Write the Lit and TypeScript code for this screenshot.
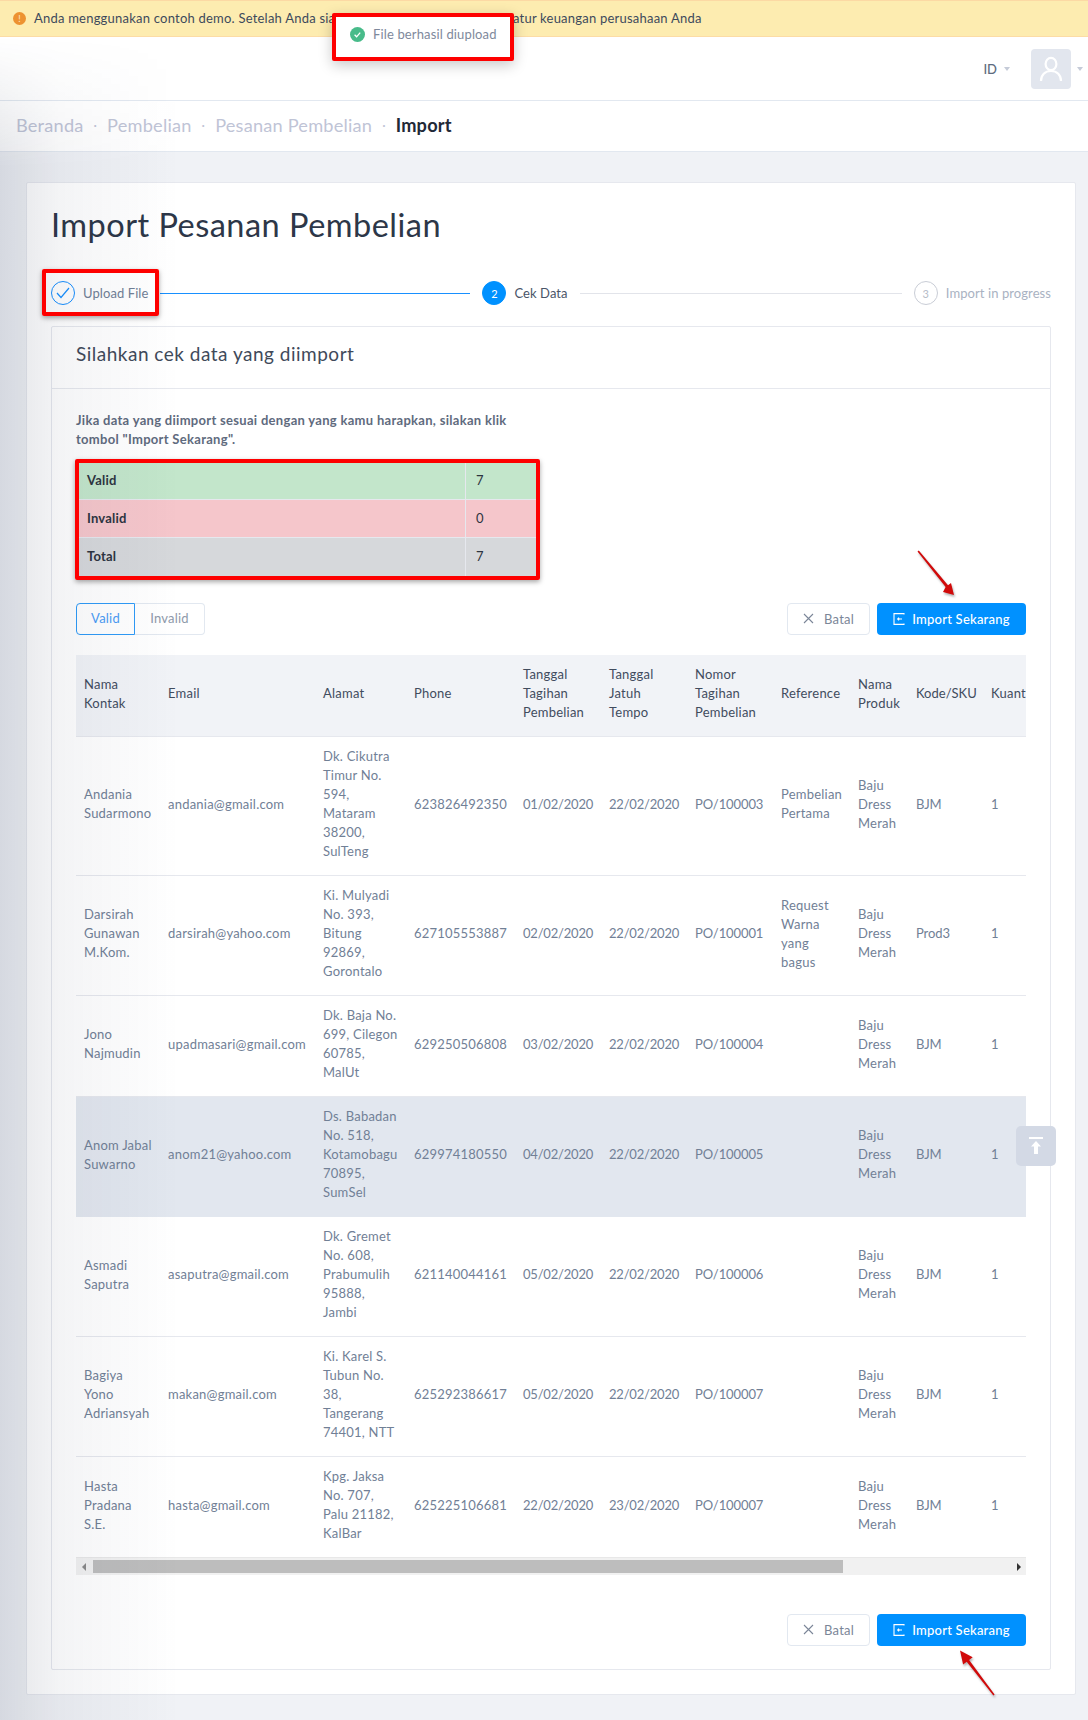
import { LitElement, html, css, svg } from 'lit';
import { customElement } from 'lit/decorators.js';

const columns = [
  { label: 'Nama\nKontak', width: 84 },
  { label: 'Email', width: 155 },
  { label: 'Alamat', width: 91 },
  { label: 'Phone', width: 109 },
  { label: 'Tanggal\nTagihan\nPembelian', width: 86 },
  { label: 'Tanggal\nJatuh\nTempo', width: 86 },
  { label: 'Nomor\nTagihan\nPembelian', width: 86 },
  { label: 'Reference', width: 77 },
  { label: 'Nama\nProduk', width: 58 },
  { label: 'Kode/SKU', width: 75 },
  { label: 'Kuantitas', width: 253 },
];

// Lato sets these columns a little wider than the original font
const cellClass = ['', '', '', '', 'date', 'date', 'code', '', '', 'code', ''];

const produk = 'Baju\nDress\nMerah';

const rows = [
  ['Andania\nSudarmono', 'andania@gmail.com', 'Dk. Cikutra\nTimur No.\n594,\nMataram\n38200,\nSulTeng', '623826492350', '01/02/2020', '22/02/2020', 'PO/100003', 'Pembelian\nPertama', produk, 'BJM', '1'],
  ['Darsirah\nGunawan\nM.Kom.', 'darsirah@yahoo.com', 'Ki. Mulyadi\nNo. 393,\nBitung\n92869,\nGorontalo', '627105553887', '02/02/2020', '22/02/2020', 'PO/100001', 'Request\nWarna\nyang\nbagus', produk, 'Prod3', '1'],
  ['Jono\nNajmudin', 'upadmasari@gmail.com', 'Dk. Baja No.\n699, Cilegon\n60785,\nMalUt', '629250506808', '03/02/2020', '22/02/2020', 'PO/100004', '', produk, 'BJM', '1'],
  ['Anom Jabal\nSuwarno', 'anom21@yahoo.com', 'Ds. Babadan\nNo. 518,\nKotamobagu\n70895,\nSumSel', '629974180550', '04/02/2020', '22/02/2020', 'PO/100005', '', produk, 'BJM', '1'],
  ['Asmadi\nSaputra', 'asaputra@gmail.com', 'Dk. Gremet\nNo. 608,\nPrabumulih\n95888,\nJambi', '621140044161', '05/02/2020', '22/02/2020', 'PO/100006', '', produk, 'BJM', '1'],
  ['Bagiya\nYono\nAdriansyah', 'makan@gmail.com', 'Ki. Karel S.\nTubun No.\n38,\nTangerang\n74401, NTT', '625292386617', '05/02/2020', '22/02/2020', 'PO/100007', '', produk, 'BJM', '1'],
  ['Hasta\nPradana\nS.E.', 'hasta@gmail.com', 'Kpg. Jaksa\nNo. 707,\nPalu 21182,\nKalBar', '625225106681', '22/02/2020', '23/02/2020', 'PO/100007', '', produk, 'BJM', '1'],
];

const closeIcon = svg`<svg class="ico" width="11" height="11" viewBox="0 0 11 11" fill="none" stroke="currentColor" stroke-width="1.1"><path d="M1 1l9 9M10 1l-9 9"/></svg>`;
const importIcon = svg`<svg class="ico" width="12" height="12" viewBox="0 0 12 12" fill="none" stroke="currentColor" stroke-width="1.1"><path d="M11 1.5V.6H1v10.8h10v-.9M4.5 6H9M4.5 6l1.6-1.3M4.5 6l1.6 1.3"/></svg>`;

@customElement('app-root')
export class AppRoot extends LitElement {
  static styles = css`
    :host {
      display: block;
      position: relative;
      width: 1088px;
      background: #f0f2f6;
      font-family: 'Lato', 'Noto Sans', sans-serif;
      font-size: 13px;
      letter-spacing: 0.22px;
      color: #718096;
    }
    .banner {
      height: 37px;
      box-sizing: border-box;
      display: flex;
      align-items: center;
      gap: 8px;
      padding: 0 13px 1px;
      background: #fdecb0;
      border-top: 1px solid #fcd9a4;
      border-bottom: 1px solid #fcdca6;
      color: #3d4a5c;
    }
    .alert-dot {
      width: 13px;
      height: 13px;
      border-radius: 50%;
      background: #ed9231;
      color: #fde9c6;
      font-size: 9px;
      line-height: 13px;
      text-align: center;
    }
    .topbar {
      height: 64px;
      box-sizing: border-box;
      display: flex;
      justify-content: flex-end;
      align-items: center;
      background: #fff;
      border-bottom: 1px solid #e2e8f0;
    }
    .lang {
      color: #5e6b80;
      font-size: 13px;
      font-weight: 500;
      letter-spacing: 0;
    }
    .caret {
      width: 0;
      height: 0;
      border: 3.5px solid transparent;
      border-top: 4px solid #c5cbd8;
      border-bottom: 0;
      margin-left: 7px;
    }
    .lang-caret {
      margin-right: 21px;
    }
    .avatar {
      width: 40px;
      height: 40px;
      border-radius: 4px;
      background: #e2e6ee;
      display: flex;
      align-items: center;
      justify-content: center;
    }
    .user-caret {
      margin: 0 5px 0 6px;
    }
    .crumbs {
      height: 51px;
      box-sizing: border-box;
      display: flex;
      align-items: center;
      gap: 10px;
      padding: 0 16px 2px;
      background: #fff;
      border-bottom: 1px solid #e2e8f0;
      font-size: 18.2px;
      letter-spacing: 0.2px;
      color: #bfc4d6;
    }
    .crumbs .now {
      color: #1f2937;
      font-weight: 700;
    }
    .sep {
      font-size: 13px;
    }
    .page {
      padding: 30px 12px 25px 26px;
    }
    .card {
      background: #fff;
      border: 1px solid #e6e8ee;
      border-radius: 2px;
      padding: 23px 24px 24px;
    }
    h1 {
      margin: 0 0 37px;
      font-size: 32.5px;
      line-height: 38px;
      font-weight: 400;
      letter-spacing: 0.48px;
      color: #2d3748;
    }
    .steps {
      display: flex;
      align-items: center;
      height: 24px;
      margin-bottom: 21px;
      letter-spacing: 0.08px;
    }
    .step {
      display: flex;
      align-items: center;
      gap: 8px;
      white-space: nowrap;
    }
    .step.active {
      color: #4a5568;
    }
    .step.todo {
      color: #a9b2c2;
    }
    .bullet {
      width: 24px;
      height: 24px;
      box-sizing: border-box;
      border-radius: 50%;
      border: 1px solid #c9cdd6;
      display: flex;
      align-items: center;
      justify-content: center;
      font-size: 11px;
      color: #b6bcc8;
    }
    .bullet.done {
      border-color: #1890ff;
    }
    .bullet.on {
      border-color: #0091ff;
      background: #0091ff;
      color: #fff;
    }
    .line {
      flex: 1;
      height: 1px;
      margin: 0 12px;
      background: #e2e4ea;
    }
    .line.done {
      flex: 0 0 310px;
      background: #1890ff;
    }
    .panel {
      border: 1px solid #e6e8ee;
      border-radius: 2px;
    }
    .panel-head {
      height: 62px;
      box-sizing: border-box;
      display: flex;
      align-items: center;
      padding: 0 24px 8px;
      border-bottom: 1px solid #e6e8ee;
      font-size: 19px;
      letter-spacing: 0.5px;
      color: #3f4a5a;
    }
    .panel-body {
      padding: 22px 24px 23px;
    }
    .lead {
      margin: 0 0 13px;
      line-height: 19px;
      font-weight: 700;
      letter-spacing: 0.3px;
      color: #5f6b7e;
    }
    .summary {
      width: 461px;
      border-spacing: 0;
      margin-bottom: 27px;
      color: #2d3440;
    }
    .summary td {
      height: 37px;
      box-sizing: border-box;
      padding: 0 10px 2px;
      border-bottom: 1px solid #e6e8ee;
    }
    .summary td:first-child {
      width: 390px;
      padding-left: 11px;
      font-weight: 700;
      letter-spacing: 0.2px;
      border-right: 1px solid #e6e8ee;
    }
    .summary tr td {
      height: 38px;
    }
    .summary tr:last-child td {
      border-bottom: 0;
    }
    .summary .ok td {
      background: #c3e6cb;
    }
    .summary .bad td {
      background: #f5c6cb;
    }
    .summary .all td {
      background: #d6d8db;
    }
    .tools {
      display: flex;
      align-items: center;
      justify-content: space-between;
      margin-bottom: 20px;
    }
    .toggle {
      display: flex;
      height: 32px;
    }
    .toggle span {
      box-sizing: border-box;
      height: 32px;
      line-height: 28px;
      text-align: center;
      border: 1px solid #e2e8f0;
    }
    .toggle .sel {
      width: 59px;
      color: #4b9cf5;
      border-color: #2f9bf7;
      border-radius: 4px 0 0 4px;
    }
    .toggle .other {
      width: 70px;
      border-left: 0;
      border-radius: 0 4px 4px 0;
      color: #8e99aa;
    }
    .actions {
      display: flex;
      justify-content: flex-end;
      gap: 7px;
    }
    .btn {
      box-sizing: border-box;
      height: 32px;
      padding-bottom: 1px;
      display: flex;
      align-items: center;
      justify-content: center;
      gap: 7px;
      border-radius: 4px;
    }
    .btn.plain {
      width: 83px;
      gap: 10px;
      background: #fff;
      border: 1px solid #e2e8f0;
      color: #7b8698;
    }
    .btn.primary {
      width: 149px;
      background: #0091ff;
      color: #fff;
      font-weight: 500;
    }
    .scroll {
      width: 950px;
      overflow: hidden;
    }
    table.data {
      width: 1160px;
      table-layout: fixed;
      border-spacing: 0;
      line-height: 19px;
    }
    .data th,
    .data td {
      padding: 10px 8px 14px;
      text-align: left;
      vertical-align: middle;
      white-space: pre-line;
      font-weight: 400;
      border-bottom: 1px solid #e6e8ee;
    }
    .data th {
      background: #f1f3f7;
      color: #414c5e;
    }
    .data td.date {
      letter-spacing: -0.2px;
    }
    .data th.code {
      letter-spacing: 0;
    }
    .data td.code {
      letter-spacing: -0.1px;
    }
    .data tr:last-child td {
      border-bottom: 0;
    }
    .data tr.hi td {
      background: #e2e7ef;
      border-bottom-color: #e2e7ef;
    }
    .scrollbar {
      height: 18px;
      box-sizing: border-box;
      display: flex;
      align-items: center;
      background: #f1f1f1;
      border-top: 1px solid #e8e8e8;
      margin-bottom: 39px;
    }
    .thumb {
      width: 750px;
      height: 13px;
      margin-left: 7px;
      background: #bdbdbd;
    }
    .arrow {
      width: 0;
      height: 0;
      border: 4px solid transparent;
    }
    .arrow.l {
      margin-left: 6px;
      border-left: 0;
      border-right: 4px solid #8a8a8a;
    }
    .arrow.r {
      margin-left: auto;
      margin-right: 5px;
      border-right: 0;
      border-left: 4px solid #333;
    }
    .shade {
      position: absolute;
      top: 37px;
      left: 0;
      bottom: 0;
      width: 180px;
      pointer-events: none;
      background: linear-gradient(90deg, rgba(30, 40, 70, 0.12), rgba(30, 40, 70, 0.05) 60px, transparent);
      -webkit-mask-image: linear-gradient(180deg, transparent, #000 130px);
      mask-image: linear-gradient(180deg, transparent, #000 130px);
    }
    .mark {
      position: absolute;
      box-sizing: border-box;
      border: 4px solid #fe0000;
      border-radius: 2px;
      box-shadow: 0 2px 5px rgba(0, 0, 0, 0.35);
      pointer-events: none;
    }
    .mark-step {
      left: 42px;
      top: 269px;
      width: 117px;
      height: 47px;
    }
    .mark-summary {
      left: 75px;
      top: 459px;
      width: 465px;
      height: 121px;
    }
    .toast {
      position: absolute;
      left: 332px;
      top: 13px;
      width: 182px;
      height: 48px;
      box-sizing: border-box;
      display: flex;
      align-items: center;
      gap: 8px;
      padding: 0 0 6px 14px;
      background: #fff;
      border: 4px solid #fe0000;
      border-radius: 2px;
      box-shadow: 0 4px 14px rgba(0, 0, 0, 0.22);
      letter-spacing: 0.14px;
      color: #7e899c;
    }
    .to-top {
      position: absolute;
      left: 1016px;
      top: 1126px;
      width: 40px;
      height: 40px;
      border-radius: 5px;
      background: #d3d9e5;
      display: flex;
      align-items: center;
      justify-content: center;
    }
    .red-arrow {
      position: absolute;
      pointer-events: none;
      filter: drop-shadow(1px 2px 1px rgba(0, 0, 0, 0.3));
    }
    .arrow-top {
      left: 912px;
      top: 546px;
    }
    .arrow-bottom {
      left: 955px;
      top: 1646px;
    }
  `;

  renderButtons() {
    return html`
      <div class="btn plain">${closeIcon}<span>Batal</span></div>
      <div class="btn primary">${importIcon}<span>Import Sekarang</span></div>
    `;
  }

  render() {
    return html`
      <div class="banner">
        <span class="alert-dot">!</span>
        <span>Anda menggunakan contoh demo. Setelah Anda siap, klik disini untuk mulai mengatur keuangan perusahaan Anda</span>
      </div>
      <div class="topbar">
        <span class="lang">ID</span>
        <span class="caret lang-caret"></span>
        <div class="avatar">
          <svg width="24" height="26" viewBox="0 0 24 26" fill="none" stroke="#fff" stroke-width="2.2">
            <ellipse cx="12" cy="8" rx="5.4" ry="6.2" />
            <path d="M2 25c0-6 4-10 10-10s10 4 10 10" />
          </svg>
        </div>
        <span class="caret user-caret"></span>
      </div>
      <div class="crumbs">
        <span>Beranda</span><span class="sep">·</span>
        <span>Pembelian</span><span class="sep">·</span>
        <span>Pesanan Pembelian</span><span class="sep">·</span>
        <span class="now">Import</span>
      </div>
      <div class="page">
        <div class="card">
          <h1>Import Pesanan Pembelian</h1>
          <div class="steps">
            <div class="step">
              <span class="bullet done">
                <svg width="14" height="12" viewBox="0 0 14 12" fill="none" stroke="#1890ff" stroke-width="1.2"><path d="M1 6l4 4.5L13 1" /></svg>
              </span>
              <span>Upload File</span>
            </div>
            <div class="line done"></div>
            <div class="step active"><span class="bullet on">2</span><span>Cek Data</span></div>
            <div class="line"></div>
            <div class="step todo"><span class="bullet">3</span><span>Import in progress</span></div>
          </div>
          <div class="panel">
            <div class="panel-head">Silahkan cek data yang diimport</div>
            <div class="panel-body">
              <p class="lead">Jika data yang diimport sesuai dengan yang kamu harapkan, silakan klik<br />tombol "Import Sekarang".</p>
              <table class="summary">
                <tr class="ok"><td>Valid</td><td>7</td></tr>
                <tr class="bad"><td>Invalid</td><td>0</td></tr>
                <tr class="all"><td>Total</td><td>7</td></tr>
              </table>
              <div class="tools">
                <div class="toggle"><span class="sel">Valid</span><span class="other">Invalid</span></div>
                <div class="actions">${this.renderButtons()}</div>
              </div>
              <div class="scroll">
                <table class="data">
                  <colgroup>${columns.map((c) => html`<col style="width:${c.width}px" />`)}</colgroup>
                  <thead><tr>${columns.map((c, j) => html`<th class=${j === 9 ? 'code' : ''}>${c.label}</th>`)}</tr></thead>
                  <tbody>
                    ${rows.map((r, i) => html`<tr class=${i === 3 ? 'hi' : ''}>${r.map((v, j) => html`<td class=${cellClass[j]}>${v}</td>`)}</tr>`)}
                  </tbody>
                </table>
              </div>
              <div class="scrollbar">
                <span class="arrow l"></span><span class="thumb"></span><span class="arrow r"></span>
              </div>
              <div class="actions">${this.renderButtons()}</div>
            </div>
          </div>
        </div>
      </div>

      <div class="shade"></div>
      <div class="toast">
        <svg width="15" height="15" viewBox="0 0 15 15"><circle cx="7.5" cy="7.5" r="7.5" fill="#48bb8a" /><path d="M4.6 7.8l2 2 3.6-4.2" fill="none" stroke="#fff" stroke-width="1.3" /></svg>
        <span>File berhasil diupload</span>
      </div>
      <div class="mark mark-step"></div>
      <div class="mark mark-summary"></div>
      <div class="to-top">
        <svg width="16" height="18" viewBox="0 0 16 18" fill="#fff"><rect x="1" y="0" width="14" height="2" /><path d="M8 4l5 5.5H10V17H6V9.5H3z" /></svg>
      </div>
      <svg class="red-arrow arrow-top" width="48" height="54" viewBox="0 0 48 54">
        <path d="M5.5 5.5L6.8 4.5L36 39.3L39 37L42 49L31 46L33.6 41.1Z" fill="#d10a0a" />
      </svg>
      <svg class="red-arrow arrow-bottom" width="48" height="56" viewBox="0 0 48 56">
        <path d="M5 4.5L17.7 11.2L14.1 13.9L39.6 48.5L38.4 49.5L11.7 15.7L8.1 18.4Z" fill="#d10a0a" />
      </svg>
    `;
  }
}
